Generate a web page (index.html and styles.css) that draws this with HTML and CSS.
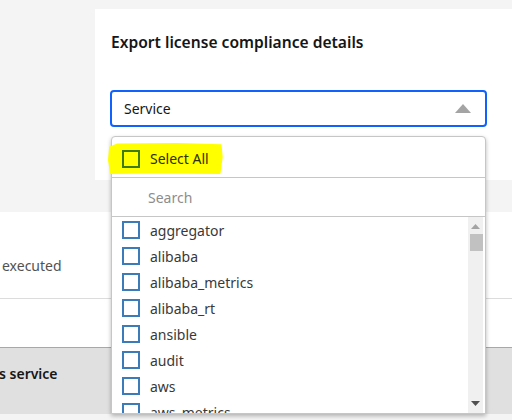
FILE: index.html
```html
<!DOCTYPE html>
<html>
<head>
<meta charset="utf-8">
<link rel="stylesheet" href="styles.css">
</head>
<body>
<div class="page">
  <div class="top-gap"></div>
  <div class="modal-row">
    <div class="gutter"></div>
    <div class="modal">
      <h2 class="modal-title">Export license compliance details</h2>
      <div class="select">
        <span class="select-value">Service</span>
        <svg class="caret" width="16" height="9" viewBox="0 0 16 9"><polygon points="0,9 8,0 16,9" fill="#a4a4a4"/></svg>
      </div>
    </div>
  </div>
  <div class="mid-gap"></div>
  <div class="table">
    <div class="row row-one"><span class="cell-text">executed</span></div>
    <div class="row row-two"></div>
    <div class="row row-head"><span class="head-text">s service</span></div>
  </div>
</div>

<div class="dropdown">
  <div class="select-all">
    <div class="mark">
      <span class="box box-green"></span>
      <span class="label">Select All</span>
    </div>
  </div>
  <div class="search"><span class="placeholder">Search</span></div>
  <div class="list-wrap">
    <div class="list">
      <div class="item"><span class="box"></span><span class="label">aggregator</span></div>
      <div class="item"><span class="box"></span><span class="label">alibaba</span></div>
      <div class="item"><span class="box"></span><span class="label">alibaba_metrics</span></div>
      <div class="item"><span class="box"></span><span class="label">alibaba_rt</span></div>
      <div class="item"><span class="box"></span><span class="label">ansible</span></div>
      <div class="item"><span class="box"></span><span class="label">audit</span></div>
      <div class="item"><span class="box"></span><span class="label">aws</span></div>
      <div class="item"><span class="box"></span><span class="label">aws_metrics</span></div>
    </div>
    <div class="scrollbar">
      <svg class="arrow-up" width="9" height="5" viewBox="0 0 9 5"><polygon points="0,5 4.5,0 9,5" fill="#a3a3a3"/></svg>
      <div class="thumb"></div>
      <div class="track"></div>
      <svg class="arrow-down" width="9" height="5" viewBox="0 0 9 5"><polygon points="0,0 9,0 4.5,5" fill="#505050"/></svg>
    </div>
  </div>
</div>
</body>
</html>
```

FILE: styles.css
```css
* { box-sizing: border-box; }
html, body {
  margin: 0;
  padding: 0;
  width: 512px;
  height: 420px;
  overflow: hidden;
  background: #f4f4f4;
  font-family: "Noto Sans", "Open Sans", sans-serif;
  color: #161616;
}
.page {
  display: flex;
  flex-direction: column;
  width: 512px;
}
.top-gap { height: 9px; }
.modal-row {
  display: flex;
  height: 171px;
}
.gutter { width: 95px; flex: none; }
.modal {
  flex: 1;
  background: #ffffff;
  padding: 23px 0 0 15px;
}
.modal-title {
  margin: 0 0 0 1px;
  font-size: 15.6px;
  line-height: 20px;
  font-weight: 600;
  letter-spacing: 0;
  color: #161616;
}
.select {
  margin-top: 38px;
  width: 377px;
  height: 37px;
  border: 2px solid #0f62fe;
  border-radius: 4px;
  display: flex;
  align-items: center;
  justify-content: space-between;
  padding: 0 14px 0 12px;
}
.select-value {
  font-size: 14px;
  color: #161616;
}
.caret { display: block; margin-top: -1px; }
.mid-gap { height: 32px; }
.table {
  display: flex;
  flex-direction: column;
  background: #ffffff;
}
.row { display: flex; align-items: center; }
.row-one {
  height: 87px;
  border-bottom: 1px solid #dcdcdc;
  padding-top: 20px;
}
.cell-text {
  font-size: 14px;
  color: #525252;
  margin-left: 2px;
}
.row-two {
  height: 49px;
  border-bottom: 1px solid #a8a8a8;
}
.row-head {
  height: 66px;
  background: #e0e0e0;
  padding-bottom: 16px;
}
.head-text {
  font-size: 14px;
  font-weight: 600;
  color: #161616;
  margin-left: -1px;
}

/* dropdown menu overlaying the page */
.dropdown {
  position: absolute;
  left: 111px;
  top: 136px;
  width: 375px;
  height: 278px;
  background: #ffffff;
  border: 1px solid #c6c6c6;
  border-radius: 4px 4px 0 0;
  box-shadow: 0 2px 4px rgba(0, 0, 0, 0.28);
  display: flex;
  flex-direction: column;
}
.select-all {
  height: 41px;
  border-bottom: 1px solid #c6c6c6;
  display: flex;
  align-items: center;
  padding-top: 3px;
}
.mark {
  display: flex;
  align-items: center;
  margin-left: -4px;
  height: 31px;
  padding: 0 14px 0 14px;
  background: #ffff00;
  clip-path: polygon(1% 12%, 8% 2%, 60% 0, 99% 4%, 100% 45%, 98% 100%, 40% 98%, 2% 100%, 0 55%);
}
.box {
  width: 18px;
  height: 18px;
  border: 2px solid #3d7ab8;
  flex: none;
  background: transparent;
}
.box-green { border-color: #3e7c10; }
.label {
  font-size: 14px;
  color: #393939;
  margin-left: 10px;
}
.mark .label { color: #2f2f00; }
.search {
  height: 39px;
  border-bottom: 1px solid #c6c6c6;
  display: flex;
  align-items: center;
  padding-left: 36px;
}
.placeholder {
  font-size: 14px;
  color: #8d8d8d;
}
.list-wrap {
  flex: 1;
  display: flex;
  overflow: hidden;
  padding-right: 2px;
}
.list {
  flex: 1;
  overflow: hidden;
}
.item {
  height: 26px;
  display: flex;
  align-items: center;
  padding-left: 10px;
}
.scrollbar {
  width: 15px;
  flex: none;
  background: #f0f0f0;
  display: flex;
  flex-direction: column;
  align-items: center;
}
.arrow-up { display: block; margin-top: 7px; }
.thumb {
  margin-top: 5px;
  width: 13px;
  margin-left: 2px;
  height: 17px;
  background: #c1c1c1;
}
.track { flex: 1; }
.arrow-down { display: block; margin-bottom: 7px; }
```
